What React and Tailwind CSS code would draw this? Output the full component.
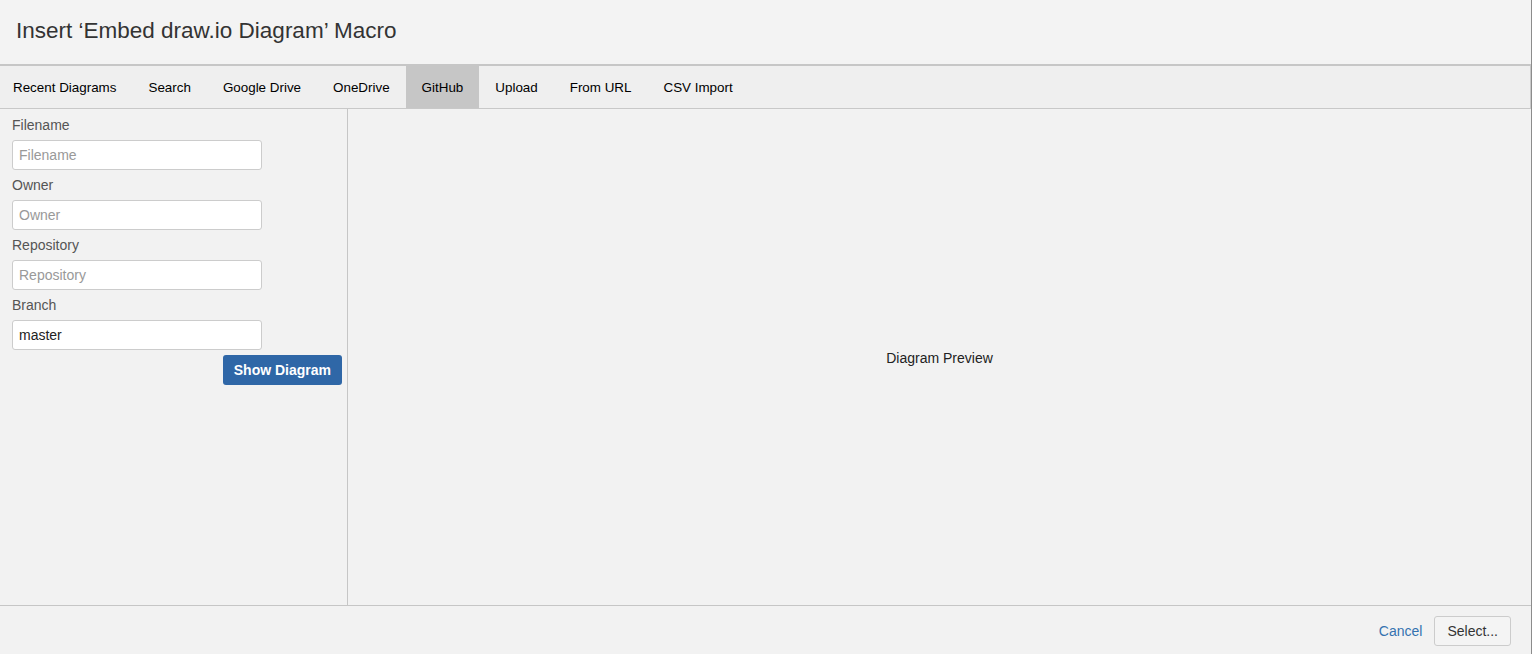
import React from 'react';

const tabs = ['Recent Diagrams', 'Search', 'Google Drive', 'OneDrive', 'GitHub', 'Upload', 'From URL', 'CSV Import'];

const fields = [
  { label: 'Filename', placeholder: 'Filename', value: '' },
  { label: 'Owner', placeholder: 'Owner', value: '' },
  { label: 'Repository', placeholder: 'Repository', value: '' },
  { label: 'Branch', placeholder: 'Branch', value: 'master' },
];

export default function App() {
  return (
    <div
      className="w-[1532px] h-[654px] flex flex-col bg-[#f2f2f2] border-r border-[#8c8c8c] overflow-hidden"
      style={{ fontFamily: '"Liberation Sans", Arial, sans-serif' }}
    >
      {/* Header */}
      <div className="h-[66px] shrink-0 flex items-center pl-4 border-b-2 border-[#c6c6c6] bg-[#f3f3f3]">
        <h1 className="text-[22.5px] text-[#333] pb-[2px]">Insert ‘Embed draw.io Diagram’ Macro</h1>
      </div>

      {/* Tabs */}
      <div className="h-[43px] shrink-0 flex bg-[#efefef] border-b border-r border-[#c8c8c8]">
        {tabs.map((t, i) => (
          <div
            key={t}
            className={
              'h-full flex items-center pt-[2px] px-4 text-[13.4px] text-black ' +
              (i === 0 ? '-ml-[3px] ' : '') +
              (t === 'GitHub' ? 'bg-[#c6c6c6]' : '')
            }
          >
            {t}
          </div>
        ))}
      </div>

      {/* Main */}
      <div className="flex-1 flex min-h-0 border-b border-[#c6c6c6]">
        <div className="w-[348px] shrink-0 border-r border-[#c6c6c6] pt-[6px] pl-3 pr-[5px] flex flex-col">
          {fields.map((f) => (
            <div key={f.label} className="flex flex-col">
              <label className="h-5 leading-5 text-[14px] text-[#555]">{f.label}</label>
              <input
                className="mt-[5px] mb-[5px] w-[250px] h-[30px] px-[6px] bg-white border border-[#ccc] rounded-[3px] text-[14px] text-[#222] placeholder:text-[#999] outline-none"
                placeholder={f.placeholder}
                defaultValue={f.value}
              />
            </div>
          ))}
          <div className="flex justify-end">
            <button className="h-[30px] px-[11px] bg-[#2f67a7] rounded-[3px] text-white font-bold text-[14px]">
              Show Diagram
            </button>
          </div>
        </div>
        <div className="flex-1 flex items-center justify-center pt-[2px] text-[14px] text-[#222]">
          Diagram Preview
        </div>
      </div>

      {/* Footer */}
      <div className="h-[48px] shrink-0 flex items-start justify-end pt-[10px] pr-5 gap-[12px]">
        <a className="h-[30px] leading-[30px] text-[14px] text-[#3572b0]">Cancel</a>
        <button className="h-[30px] px-3 bg-[#f4f4f4] border border-[#ccc] rounded-[3px] text-[14px] text-[#333]">
          Select...
        </button>
      </div>
    </div>
  );
}
